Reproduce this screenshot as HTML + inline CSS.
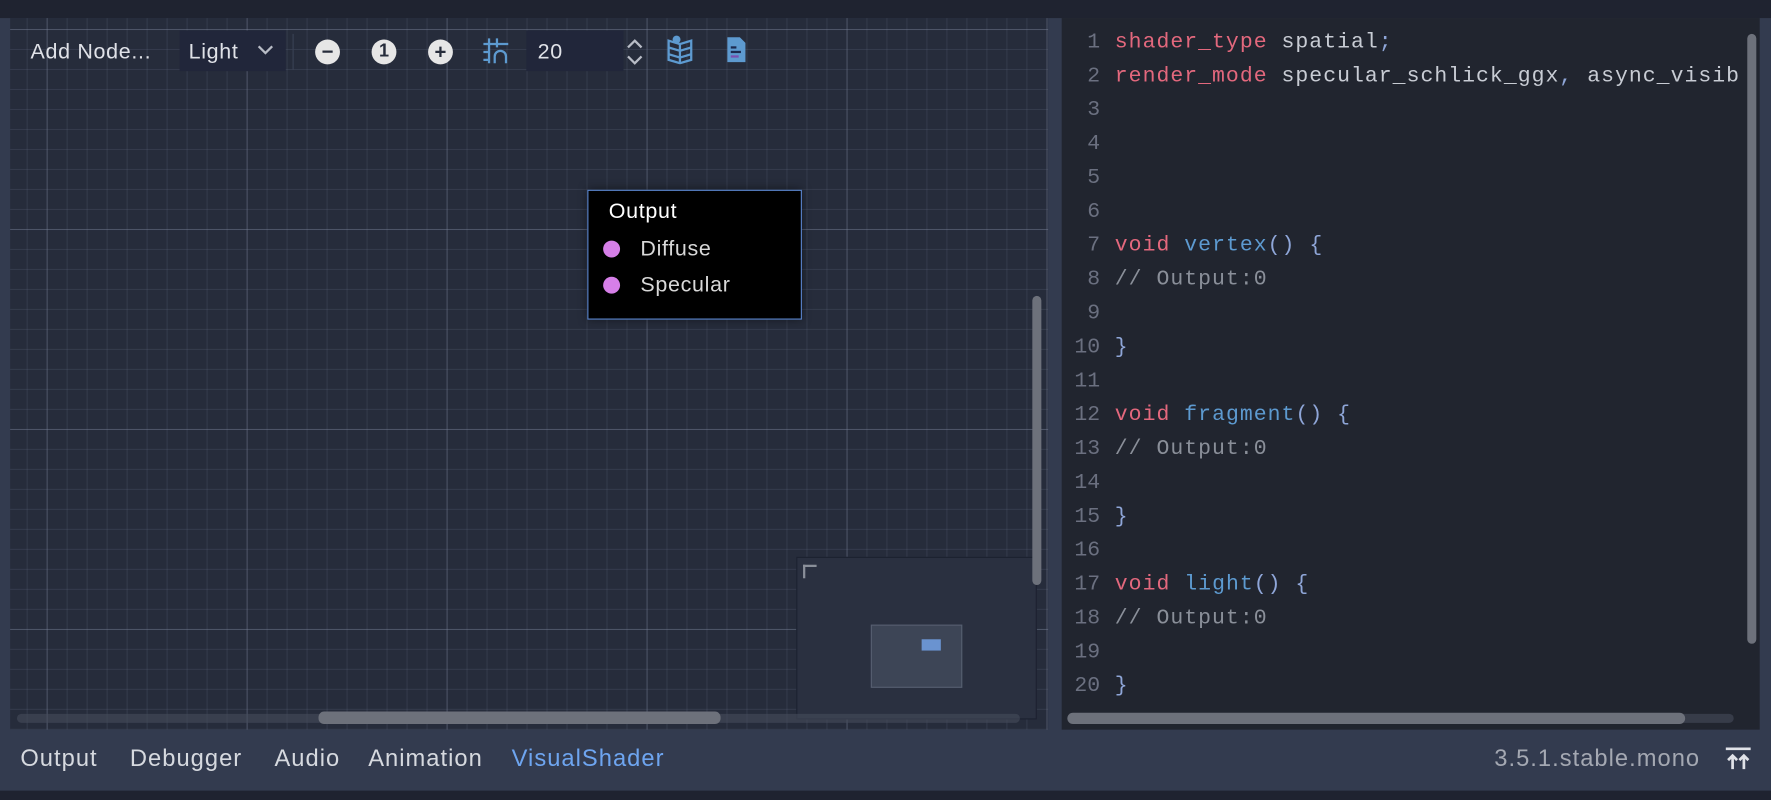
<!DOCTYPE html>
<html><head><meta charset="utf-8"><style>
html,body{margin:0;padding:0;width:1771px;height:800px;overflow:hidden;background:#1f2330;}
#root{position:absolute;left:0;top:0;width:1568px;height:708px;transform:scale(1.12946);transform-origin:0 0;font-family:"Liberation Sans","DejaVu Sans",sans-serif;}
.abs{position:absolute;}
#main{left:0;top:16px;width:1568px;height:684px;background:#333b4f;}
#graph{left:9px;top:16px;width:919px;height:630px;background-color:#262c3b;
background-image:
linear-gradient(90deg,rgba(120,128,150,.38) 1px,transparent 1px),
linear-gradient(0deg,rgba(120,128,150,.38) 1px,transparent 1px),
linear-gradient(90deg,rgba(90,98,120,.28) 1px,transparent 1px),
linear-gradient(0deg,rgba(90,98,120,.28) 1px,transparent 1px);
background-size:177.07px 177.07px,177.07px 177.07px,17.707px 17.707px,17.707px 17.707px;
background-position:32.3px 0,0 10.6px,14.6px 0,0 10.56px;overflow:hidden;}
#code{left:940px;top:16px;width:618px;height:630px;background:#21252f;}
.t{color:#e0e2e8;font-size:19px;white-space:nowrap;letter-spacing:0.6px;}
.circ{width:22px;height:22px;border-radius:50%;background:#e6e6e6;color:#262c3b;font-weight:bold;text-align:center;line-height:22px;font-size:18px;}
.ln{position:absolute;left:0;width:34px;text-align:right;color:#6b7080;letter-spacing:0;}
.cl{position:absolute;left:47px;color:#c8ccd4;white-space:pre;}
.code{font-family:"Liberation Mono","DejaVu Sans Mono",monospace;font-size:19px;letter-spacing:0.9px;}
.k{color:#e3687d}.f{color:#5d9ad0}.p{color:#8fa6d8}.c{color:#8a8f99}
.tab{position:absolute;top:660px;font-size:21px;letter-spacing:0.9px;color:#d6d9df;}
</style></head><body><div id="root">
<div class="abs" id="main"></div>
<div class="abs" id="graph">
  <div class="abs" style="left:511px;top:152px;width:188px;height:113px;background:#000;border:1px solid #5b86d0;box-shadow:0 0 8px rgba(0,0,0,.5);">
    <div class="abs t" style="left:18px;top:8px;color:#fff;font-size:19px;">Output</div>
    <div class="abs" style="left:13px;top:44px;width:15px;height:15px;border-radius:50%;background:#d67fe8;"></div>
    <div class="abs t" style="left:46px;top:41px;color:#d8d8d8;">Diffuse</div>
    <div class="abs" style="left:13px;top:76px;width:15px;height:15px;border-radius:50%;background:#d67fe8;"></div>
    <div class="abs t" style="left:46px;top:73px;color:#d8d8d8;">Specular</div>
  </div>
  <div class="abs" style="left:696px;top:477px;width:211px;height:142px;background:#2a3040;border:1px solid #1c2130;">
    <div class="abs" style="left:5px;top:6px;width:2px;height:12px;background:#8a8f99;"></div>
    <div class="abs" style="left:5px;top:6px;width:12px;height:2px;background:#8a8f99;"></div>
    <div class="abs" style="left:65px;top:59px;width:79px;height:54px;background:#3d4556;border:1px solid #565e70;"></div>
    <div class="abs" style="left:110px;top:72px;width:17px;height:10px;background:#6a93d0;"></div>
  </div>
  <div class="abs" style="left:6px;top:616px;width:888px;height:8px;background:rgba(70,76,92,.6);border-radius:4px;"></div>
  <div class="abs" style="left:273px;top:614px;width:356px;height:11px;background:#6d717b;border-radius:5px;"></div>
  <div class="abs" style="left:905px;top:246px;width:8px;height:256px;background:#6d717b;border-radius:4px;"></div>
  <div class="abs t" style="left:18px;top:20px;">Add Node...</div>
  <div class="abs" style="left:150px;top:11px;width:94px;height:36px;background:#21263a;"></div>
  <div class="abs t" style="left:158px;top:20px;">Light</div>
  <svg class="abs" style="left:218px;top:22px" width="16" height="12"><path d="M2 3l6 6 6-6" stroke="#b8bcc6" stroke-width="2" fill="none"/></svg>
  <div class="abs" style="left:250px;top:14px;width:1px;height:32px;background:#3a4154"></div>
  <div class="abs circ" style="left:270px;top:19px;">−</div>
  <div class="abs circ" style="left:320px;top:19px;font-size:16px;">1</div>
  <div class="abs circ" style="left:370px;top:19px;">+</div>
  <svg class="abs" style="left:418px;top:17px" width="24" height="24"><g stroke="#5d9ad0" stroke-width="2" fill="none"><path d="M6 1v22M13 1v8M1 6h22M1 13h6M1 20h6"/><path d="M11 23v-6a5 5 0 0 1 10 0v6"/></g></svg>
  <div class="abs" style="left:457px;top:11px;width:86px;height:36px;background:#21263a;"></div>
  <div class="abs t" style="left:467px;top:20px;">20</div>
  <svg class="abs" style="left:545px;top:17px" width="16" height="26"><path d="M2 9l6-6 6 6M2 17l6 6 6-6" stroke="#b8bcc6" stroke-width="2" fill="none"/></svg>
  <svg class="abs" style="left:581px;top:15px" width="24" height="26"><g stroke="#5d9ad0" stroke-width="2" fill="none"><path d="M2 5l10 3 10-3v17l-10 3-10-3z"/><path d="M12 8v17M2 11l10 3 10-3M2 17l10 3 10-3"/></g><circle cx="9" cy="4" r="3.5" fill="#5d9ad0"/></svg>
  <svg class="abs" style="left:633px;top:16px" width="20" height="24"><path d="M2 1h11l5 5v17H2z" fill="#5d9ad0"/><rect x="5" y="9" width="5" height="2" fill="#1c2a50"/><rect x="5" y="13" width="9" height="2" fill="#1c2a50"/><rect x="5" y="17" width="7" height="2" fill="#7a4fb0"/></svg>
</div>
<div class="abs code" id="code">
  <div class="ln" style="top:10px">1</div><div class="cl" style="top:10px"><span class="k">shader_type</span> spatial<span class="p">;</span></div>
  <div class="ln" style="top:40px">2</div><div class="cl" style="top:40px"><span class="k">render_mode</span> specular_schlick_ggx<span class="p">,</span> async_visib</div>
  <div class="ln" style="top:70px">3</div>
  <div class="ln" style="top:100px">4</div>
  <div class="ln" style="top:130px">5</div>
  <div class="ln" style="top:160px">6</div>
  <div class="ln" style="top:190px">7</div><div class="cl" style="top:190px"><span class="k">void</span> <span class="f">vertex</span><span class="p">() {</span></div>
  <div class="ln" style="top:220px">8</div><div class="cl c" style="top:220px">// Output:0</div>
  <div class="ln" style="top:250px">9</div>
  <div class="ln" style="top:280px">10</div><div class="cl p" style="top:280px">}</div>
  <div class="ln" style="top:310px">11</div>
  <div class="ln" style="top:340px">12</div><div class="cl" style="top:340px"><span class="k">void</span> <span class="f">fragment</span><span class="p">() {</span></div>
  <div class="ln" style="top:370px">13</div><div class="cl c" style="top:370px">// Output:0</div>
  <div class="ln" style="top:400px">14</div>
  <div class="ln" style="top:430px">15</div><div class="cl p" style="top:430px">}</div>
  <div class="ln" style="top:460px">16</div>
  <div class="ln" style="top:490px">17</div><div class="cl" style="top:490px"><span class="k">void</span> <span class="f">light</span><span class="p">() {</span></div>
  <div class="ln" style="top:520px">18</div><div class="cl c" style="top:520px">// Output:0</div>
  <div class="ln" style="top:550px">19</div>
  <div class="ln" style="top:580px">20</div><div class="cl p" style="top:580px">}</div>
  <div class="abs" style="left:5px;top:616px;width:590px;height:8px;background:rgba(70,76,92,.6);border-radius:4px;"></div>
  <div class="abs" style="left:5px;top:615px;width:547px;height:10px;background:#6d717b;border-radius:5px;"></div>
  <div class="abs" style="left:607px;top:14px;width:8px;height:540px;background:#6d717b;border-radius:4px;"></div>
</div>
<div class="tab" style="left:18px">Output</div>
<div class="tab" style="left:115px">Debugger</div>
<div class="tab" style="left:243px">Audio</div>
<div class="tab" style="left:326px">Animation</div>
<div class="tab" style="left:453px;color:#6ea5f0">VisualShader</div>
<div class="tab" style="left:1323px;color:#a4a8b2">3.5.1.stable.mono</div>
<svg class="abs" style="left:1527px;top:661px" width="24" height="22"><g stroke="#e0e2e8" stroke-width="2.4" fill="none"><path d="M1 2h22"/><path d="M7 20V8M3 12l4-4 4 4M17 20V8M13 12l4-4 4 4"/></g></svg>
</div></body></html>
